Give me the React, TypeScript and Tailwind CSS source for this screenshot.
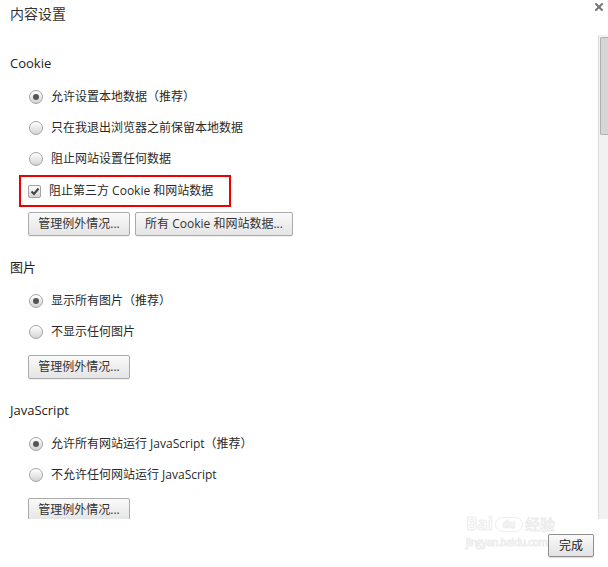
import React from "react";

const FONT = { fontFamily: '"Open Sans", "Noto Sans CJK SC", sans-serif' };

function Radio({ checked, label }: { checked?: boolean; label: string }) {
  return (
    <div className="h-[31px] flex items-center pl-[19px]">
      <span className="w-[14px] h-[14px] rounded-full border border-[#a3a3a3] bg-linear-to-b from-[#ffffff] to-[#d4d4d4] flex items-center justify-center shadow-[inset_0_1px_1px_rgba(255,255,255,0.9)]">
        {checked && <span className="w-[6px] h-[6px] rounded-full bg-[#555555]" />}
      </span>
      <span className="ml-[8px] text-[12px] leading-[16px] text-[#2a2a2a]">{label}</span>
    </div>
  );
}

function Btn({ label, w }: { label: string; w: string }) {
  return (
    <div
      className={`${w} h-[24px] border border-[#aaaaaa] rounded-[2px] bg-linear-to-b from-[#fafafa] to-[#e4e4e4] flex items-center justify-center text-[12px] text-[#333333] shadow-[0_1px_0_rgba(0,0,0,0.06)]`}
    >
      {label}
    </div>
  );
}

function Heading({ children, mt }: { children: React.ReactNode; mt: string }) {
  return <div className={`${mt} text-[13px] leading-[20px] text-[#222222]`}>{children}</div>;
}

export default function App() {
  return (
    <div className="relative w-[608px] h-[567px] bg-white overflow-hidden flex flex-col" style={FONT}>
      {/* header */}
      <div className="h-[35px] shrink-0 flex items-start justify-between">
        <div className="pl-[10px] pt-[5px] text-[14px] leading-[18px] text-[#333333]">内容设置</div>
        <svg className="mt-[3px] mr-[5px]" width="8" height="8" viewBox="0 0 8 8">
          <path d="M1 1 L7 7 M7 1 L1 7" stroke="#777777" strokeWidth="2" strokeLinecap="square" />
        </svg>
      </div>

      {/* body */}
      <div className="h-[484px] shrink-0 flex">
        <div className="flex-1 overflow-hidden pl-[10px]">
          <Heading mt="mt-[18px]">Cookie</Heading>
          <div className="mt-[8px]">
            <Radio checked label="允许设置本地数据（推荐）" />
            <Radio label="只在我退出浏览器之前保留本地数据" />
            <Radio label="阻止网站设置任何数据" />
          </div>
          <div className="mt-[1px] ml-[9px] w-[212px] h-[32px] border-2 border-[#ee0000] flex items-center pl-[7px]">
            <span className="w-[13px] h-[13px] rounded-[2px] border border-[#a3a3a3] bg-linear-to-b from-[#ffffff] to-[#d4d4d4] flex items-center justify-center">
              <svg width="10" height="9" viewBox="0 0 10 9">
                <path d="M1.5 4.5 L4 7 L8.5 1.5" stroke="#444444" strokeWidth="2" fill="none" />
              </svg>
            </span>
            <span className="ml-[8px] text-[12px] leading-[16px] text-[#2a2a2a]">阻止第三方 Cookie 和网站数据</span>
          </div>
          <div className="mt-[5px] ml-[18px] flex gap-[5px]">
            <Btn label="管理例外情况..." w="w-[102px]" />
            <Btn label="所有 Cookie 和网站数据..." w="w-[158px]" />
          </div>

          <Heading mt="mt-[21px]">图片</Heading>
          <div className="mt-[8px]">
            <Radio checked label="显示所有图片（推荐）" />
            <Radio label="不显示任何图片" />
          </div>
          <div className="mt-[8px] ml-[18px] flex">
            <Btn label="管理例外情况..." w="w-[102px]" />
          </div>

          <Heading mt="mt-[21px]">JavaScript</Heading>
          <div className="mt-[8px]">
            <Radio checked label="允许所有网站运行 JavaScript（推荐）" />
            <Radio label="不允许任何网站运行 JavaScript" />
          </div>
          <div className="mt-[8px] ml-[18px] flex">
            <Btn label="管理例外情况..." w="w-[102px]" />
          </div>
        </div>

        {/* scrollbar */}
        <div className="w-[10px] shrink-0 bg-[#f1f1f1] border-l border-[#dcdcdc] pt-[2px] pl-[1px]">
          <div className="h-[98px] bg-[#d6d6d6] border border-[#b0b0b0] rounded-l-[2px] border-r-0" />
        </div>
      </div>

      {/* footer */}
      <div className="flex-1 flex justify-end items-start pt-[15px] pr-[14px] relative">
        <div className="absolute left-[466px] top-[-6px] pointer-events-none select-none text-transparent [-webkit-text-stroke:1px_#ededed]">
          <div className="flex items-center h-[22px]">
            <span className="text-[17px] leading-[22px] font-bold">Bai</span>
            <span className="ml-[2px] w-[28px] h-[15px] rounded-full border border-[#ededed] text-[10px] leading-[14px] font-bold flex items-center justify-center">du</span>
            <span className="ml-[2px] text-[15px] leading-[22px]">经验</span>
          </div>
          <div className="whitespace-nowrap text-[10px] leading-[14px] tracking-[-0.2px]">jingyan.baidu.com</div>
        </div>
        <div className="relative w-[46px] h-[23px] border border-[#8f8f8f] rounded-[2px] bg-linear-to-b from-[#fafafa] to-[#e2e2e2] flex items-center justify-center text-[12px] text-[#222222] shadow-[0_1px_1px_rgba(0,0,0,0.15)]">
          完成
        </div>
      </div>
    </div>
  );
}
